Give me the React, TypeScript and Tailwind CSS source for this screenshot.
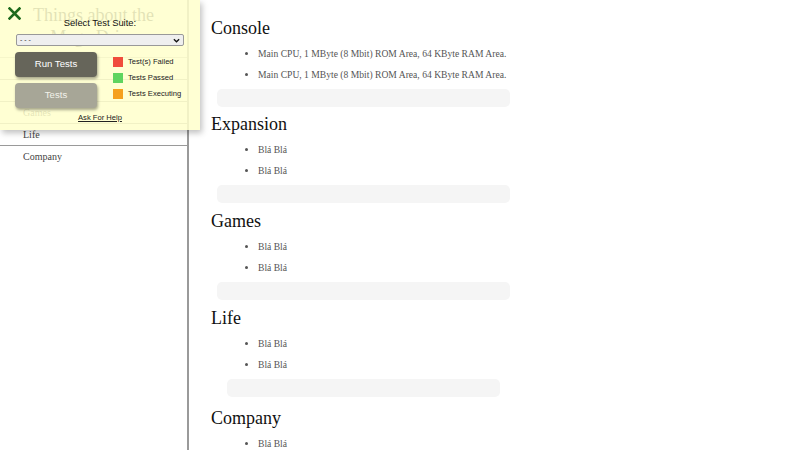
import { useState } from 'react';

const navItems = ['Console', 'Expansion', 'Games', 'Life', 'Company'];

const cpu = 'Main CPU, 1 MByte (8 Mbit) ROM Area, 64 KByte RAM Area.';

const sections = [
  { title: 'Console', items: [cpu, cpu], box: 'ml-[6px] w-[293px] mb-[7px]' },
  { title: 'Expansion', items: ['Blá Blá', 'Blá Blá'], box: 'ml-[6px] w-[293px] mb-[8px]' },
  { title: 'Games', items: ['Blá Blá', 'Blá Blá'], box: 'ml-[6px] w-[293px] mb-[8px]' },
  { title: 'Life', items: ['Blá Blá', 'Blá Blá'], box: 'ml-[16px] w-[273px] mb-[11px]' },
  { title: 'Company', items: ['Blá Blá', 'Blá Blá'], box: 'ml-[6px] w-[293px] mb-[8px]' },
];

function Legend({ color, label }: { color: string; label: string }) {
  return (
    <div className="flex h-[16px] items-center gap-[5px]">
      <span className={`block h-[10px] w-[10px] ${color}`} />
      <span className="text-[7.6px] leading-[10px] text-[#222]">{label}</span>
    </div>
  );
}

function TestPanel() {
  const [open, setOpen] = useState(true);
  if (!open) return null;
  return (
    <div className="absolute left-0 top-0 h-[130px] w-[200px] bg-[rgba(255,255,204,0.86)] shadow-[2px_3px_6px_rgba(0,0,0,0.25)] font-['Liberation_Sans',Arial,sans-serif]">
      <button
        onClick={() => setOpen(false)}
        className="absolute left-[8px] top-[7px] h-[13px] w-[13px]"
        aria-label="close"
      >
        <svg viewBox="0 0 13 13" className="h-[13px] w-[13px]">
          <path d="M1.5 1.5 L11.5 11.5 M11.5 1.5 L1.5 11.5" stroke="#1d6a1d" strokeWidth="2.6" strokeLinecap="square" />
        </svg>
      </button>
      <div className="flex flex-col pt-[17px]">
        <div className="text-center text-[9.4px] leading-[12px] text-[#111]">Select Test Suite:</div>
        <div className="mx-[16px] mt-[5px] flex h-[12px] items-center justify-between rounded-[2px] border border-[#999] bg-[#efefef] px-[3px]">
          <span className="text-[7px] leading-[8px] text-[#333]">- - -</span>
          <svg viewBox="0 0 8 5" className="h-[5px] w-[7px]">
            <path d="M1 1 L4 4 L7 1" stroke="#111" strokeWidth="1.5" fill="none" />
          </svg>
        </div>
        <div className="mt-[6px] flex">
          <div className="ml-[15px] flex w-[82px] flex-col gap-[6px]">
            <button className="h-[25px] rounded-[4px] bg-[#66655a] text-[9.6px] text-white shadow-[1px_2px_3px_rgba(0,0,0,0.35)]">
              Run Tests
            </button>
            <button className="h-[25px] rounded-[4px] bg-[#a7a697] text-[9.6px] text-[#f2f2ea] shadow-[1px_2px_3px_rgba(0,0,0,0.35)]">
              Tests
            </button>
          </div>
          <div className="ml-[16px] flex flex-col pt-[2px]">
            <Legend color="bg-[#f04c3c]" label="Test(s) Failed" />
            <Legend color="bg-[#5fd45f]" label="Tests Passed" />
            <Legend color="bg-[#f5a01e]" label="Tests Executing" />
          </div>
        </div>
        <a href="#" className="mt-[5px] text-center text-[7.6px] leading-[10px] text-[#222] underline">
          Ask For Help
        </a>
      </div>
    </div>
  );
}

export default function App() {
  return (
    <div className="relative flex h-[450px] w-full overflow-hidden bg-white font-['Liberation_Serif','Times_New_Roman',serif]">
      <aside className="w-[189px] shrink-0 border-r-2 border-[#9a9a9a] bg-white">
        <h1 className="px-[26px] pt-[4px] text-center text-[18px] font-normal leading-[22px] text-[#333]">
          Things about the Mega Drive
        </h1>
        <ul className="mt-[9px]">
          {navItems.map((n) => (
            <li key={n} className="flex h-[22px] items-center border-t border-[#9a9a9a] pl-[23px] text-[10px] text-[#444] first:border-[#bbb]">
              {n}
            </li>
          ))}
        </ul>
      </aside>
      <main className="flex-1 pl-[22px] pt-[18px]">
        {sections.map((s) => (
          <section key={s.title}>
            <h2 className="text-[18px] font-normal leading-[20px] text-[#111]">{s.title}</h2>
            <ul className="mt-[9px] flex list-disc flex-col gap-[7px] pl-[47px] text-[9.6px] leading-[14px] text-[#555]">
              {s.items.map((it, i) => (
                <li key={i}>{it}</li>
              ))}
            </ul>
            <div className={`mt-[7px] h-[18px] rounded-[5px] bg-[#f5f5f5] ${s.box}`} />
          </section>
        ))}
      </main>
      <TestPanel />
    </div>
  );
}
